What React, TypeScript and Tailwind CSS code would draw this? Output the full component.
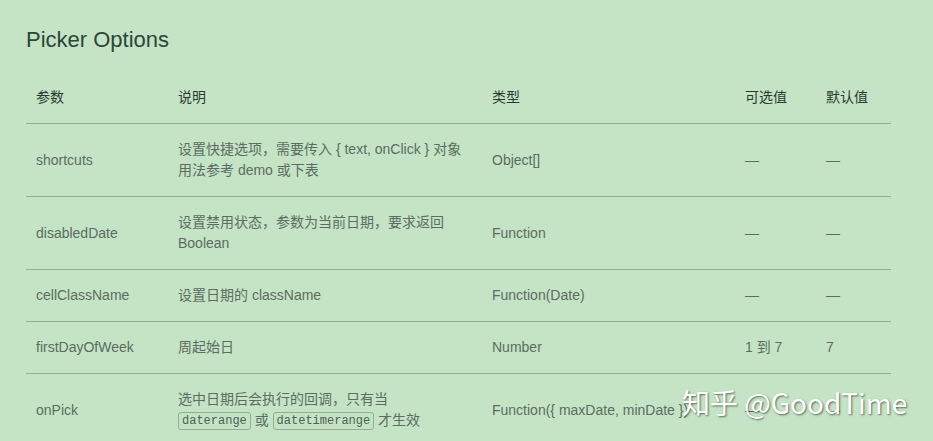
import React from "react";

const font = { fontFamily: '"Liberation Sans", Arial, "Noto Sans CJK SC", sans-serif' };

function Code({ children }: { children: React.ReactNode }) {
  return (
    <code className="inline-block rounded-[3px] border border-[#93ad95] px-[3px] font-['Liberation_Mono',monospace] text-[12px] leading-[16px] text-[#4f5f55] align-middle">
      {children}
    </code>
  );
}

const rows: { name: string; desc: React.ReactNode; type: string; opts: string; def: string }[] = [
  {
    name: "shortcuts",
    desc: (
      <>
        设置快捷选项，需要传入 {"{ text, onClick }"} 对象
        <br />
        用法参考 demo 或下表
      </>
    ),
    type: "Object[]",
    opts: "—",
    def: "—",
  },
  {
    name: "disabledDate",
    desc: (
      <>
        设置禁用状态，参数为当前日期，要求返回
        <br />
        Boolean
      </>
    ),
    type: "Function",
    opts: "—",
    def: "—",
  },
  { name: "cellClassName", desc: "设置日期的 className", type: "Function(Date)", opts: "—", def: "—" },
  { name: "firstDayOfWeek", desc: "周起始日", type: "Number", opts: "1 到 7", def: "7" },
  {
    name: "onPick",
    desc: (
      <>
        选中日期后会执行的回调，只有当
        <br />
        <Code>daterange</Code> 或 <Code>datetimerange</Code> 才生效
      </>
    ),
    type: "Function({ maxDate, minDate })",
    opts: "—",
    def: "—",
  },
];

export default function App() {
  return (
    <div className="relative h-[441px] w-[933px] overflow-hidden bg-[#c4e4c5]" style={font}>
      <div className="px-[26px] pt-[26px]">
        <h3 className="text-[22px] leading-[28px] text-[#2b4638]">Picker Options</h3>
        <table className="mt-[18px] w-[865px] table-fixed border-collapse text-[14px] leading-[21px]">
          <colgroup>
            <col className="w-[142px]" />
            <col className="w-[314px]" />
            <col className="w-[253px]" />
            <col className="w-[81px]" />
            <col className="w-[75px]" />
          </colgroup>
          <thead>
            <tr className="border-b border-[#8fae91]">
              {["参数", "说明", "类型", "可选值", "默认值"].map((h) => (
                <th key={h} className="px-[10px] py-[15px] text-left font-normal text-[#2b3a31] whitespace-nowrap">
                  {h}
                </th>
              ))}
            </tr>
          </thead>
          <tbody>
            {rows.map((r) => (
              <tr key={r.name} className="border-b border-[#8fae91] text-[#5c6c61]">
                <td className="px-[10px] py-[15px] align-middle">{r.name}</td>
                <td className="px-[10px] py-[15px] align-middle">{r.desc}</td>
                <td className="px-[10px] py-[15px] align-middle whitespace-nowrap">{r.type}</td>
                <td className="px-[10px] py-[15px] align-middle whitespace-nowrap">{r.opts}</td>
                <td className="px-[10px] py-[15px] align-middle whitespace-nowrap">{r.def}</td>
              </tr>
            ))}
          </tbody>
        </table>
      </div>
      <div className="absolute left-[682px] top-[384px] whitespace-nowrap text-[28px] leading-[36px] text-white [text-shadow:1px_1px_2px_rgba(0,0,0,0.55)]" style={{ fontFamily: '"Noto Sans CJK SC", "Noto Sans", sans-serif' }}>
        知乎 @GoodTime
      </div>
    </div>
  );
}
